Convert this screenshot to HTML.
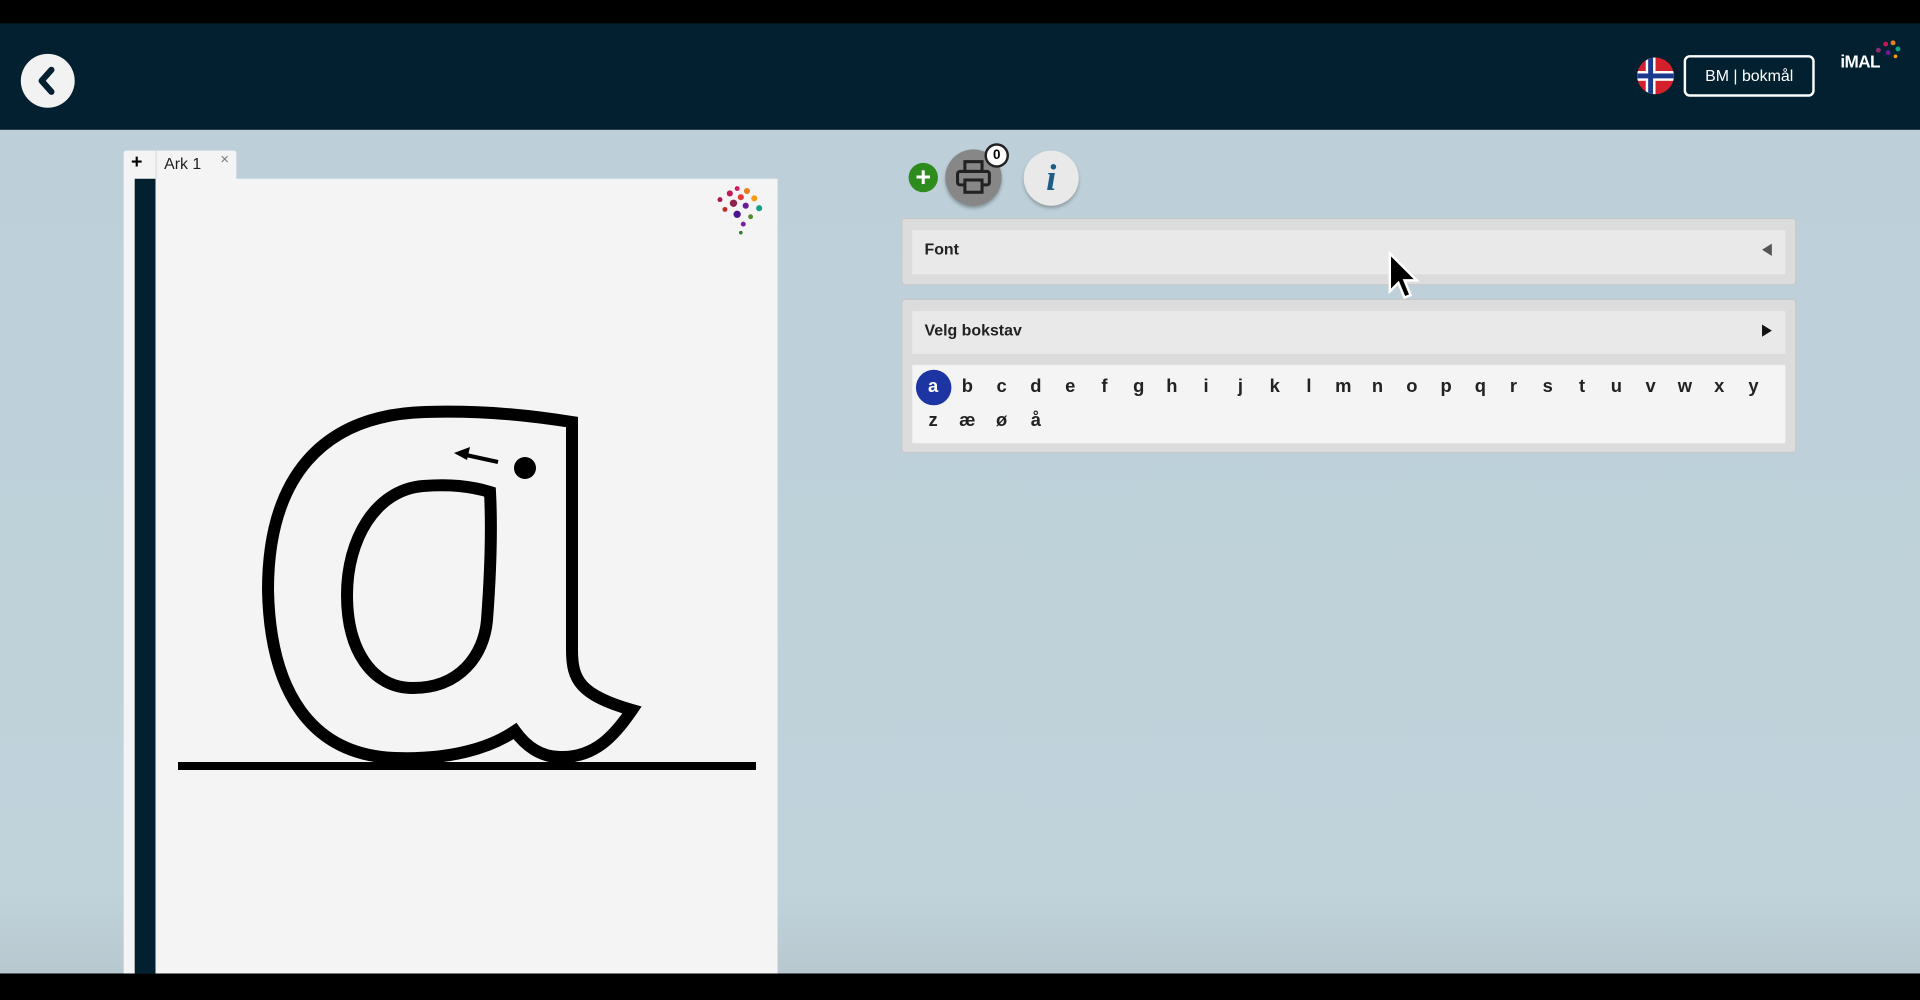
<!DOCTYPE html>
<html><head><meta charset="utf-8"><style>
*{margin:0;padding:0;box-sizing:border-box}
html,body{width:1920px;height:1000px;overflow:hidden;background:#000;font-family:"Liberation Sans",sans-serif}
#s{position:absolute;left:0;top:0;width:1568px;height:817px;transform:scale(1.22449);transform-origin:0 0}
.a{position:absolute}
.letters span{position:absolute;width:28px;text-align:center;font-size:15px;font-weight:bold;color:#222;line-height:20px}
</style></head><body>
<div id="s">
<div class="a" style="left:0;top:19px;width:1568px;height:87px;background:#02202f"></div>
<div class="a" style="left:0;top:106px;width:1568px;height:689px;background:linear-gradient(#bdd0d9,#c0d3db 90%,#b8c8cf)"></div>
<!-- back -->
<div class="a" style="left:17px;top:44px;width:44px;height:44px;border-radius:50%;background:#f2f2f2"></div>
<svg class="a" style="left:17px;top:44px" width="44" height="44"><path d="M25 13 L17 22 L25 31" stroke="#02202f" stroke-width="5" fill="none" stroke-linecap="round" stroke-linejoin="round"/></svg>
<!-- flag -->
<svg class="a" style="left:1337px;top:47px" width="30" height="30"><clipPath id="c"><circle cx="15" cy="15" r="15"/></clipPath><g clip-path="url(#c)"><rect width="30" height="30" fill="#d3202a"/><rect x="7" width="8" height="30" fill="#fff"/><rect y="11" width="30" height="8" fill="#fff"/><rect x="9" width="4" height="30" fill="#1b3a8c"/><rect y="13" width="30" height="4" fill="#1b3a8c"/></g></svg>
<div class="a" style="left:1375px;top:45px;width:107px;height:34px;border:2px solid #fff;border-radius:5px;color:#fff;font-size:13px;text-align:center;line-height:30px">BM | bokmål</div>
<div class="a" style="left:1503px;top:42px;color:#fff;font-weight:bold;font-size:14px;letter-spacing:-0.5px">iMAL</div>
<svg class="a" style="left:1520px;top:30px" width="36" height="30"><g fill="#c2185b"><circle cx="20" cy="6" r="2"/><circle cx="26" cy="5" r="2" fill="#e67e22"/><circle cx="30" cy="10" r="2" fill="#16a085"/><circle cx="14" cy="11" r="2" fill="#8e2d6b"/><circle cx="22" cy="13" r="2" fill="#6a1b9a"/><circle cx="28" cy="16" r="1.5" fill="#f39c12"/></g></svg>
<!-- sheet -->
<div class="a" style="left:101px;top:123px;width:92px;height:25px;background:#f4f4f4;border-radius:2px 2px 0 0"></div>
<div class="a" style="left:107px;top:124px;font-size:16px;font-weight:bold">+</div>
<div class="a" style="left:127px;top:123px;width:1px;height:24px;background:#ddd"></div>
<div class="a" style="left:134px;top:126px;font-size:13px;color:#222">Ark 1</div>
<div class="a" style="left:180px;top:123px;font-size:12px;color:#777">×</div>
<div class="a" style="left:101px;top:146px;width:534px;height:649px;background:#f4f4f4"></div>
<div class="a" style="left:110px;top:146px;width:17px;height:649px;background:#02202f"></div>
<svg class="a" style="left:580px;top:150px" width="48" height="46"><circle cx="22" cy="4" r="2" fill="#d81b60"/><circle cx="30" cy="6" r="2.5" fill="#e67e22"/><circle cx="16" cy="8" r="2.5" fill="#c2185b"/><circle cx="25" cy="11" r="2.5" fill="#e53935"/><circle cx="36" cy="12" r="2.5" fill="#f39c12"/><circle cx="8" cy="13" r="2" fill="#ad1457"/><circle cx="19" cy="16" r="3" fill="#8e244d"/><circle cx="29" cy="18" r="2.5" fill="#6a1b9a"/><circle cx="40" cy="20" r="2.5" fill="#16a085"/><circle cx="12" cy="21" r="2" fill="#c62828"/><circle cx="22" cy="25" r="3" fill="#4a148c"/><circle cx="33" cy="27" r="2" fill="#558b2f"/><circle cx="27" cy="33" r="2" fill="#7b1fa2"/><circle cx="25" cy="40" r="1.5" fill="#2e7d32"/></svg>
<!-- buttons -->
<div class="a" style="left:742px;top:133px;width:24px;height:24px;border-radius:50%;background:#2e8b1e;color:#fff;font-size:22px;font-weight:bold;text-align:center;line-height:23px">+</div>
<div class="a" style="left:772px;top:122px;width:46px;height:46px;border-radius:50%;background:#878787;box-shadow:0 2px 3px rgba(0,0,0,.3)"></div>
<svg class="a" style="left:779px;top:130px" width="32" height="30"><rect x="9" y="2" width="14" height="8" fill="none" stroke="#222" stroke-width="2.5"/><rect x="3" y="10" width="26" height="11" rx="2" fill="none" stroke="#222" stroke-width="2.5"/><rect x="9" y="17" width="14" height="10" fill="#878787" stroke="#222" stroke-width="2.5"/></svg>
<div class="a" style="left:804px;top:117px;width:20px;height:20px;border-radius:50%;background:#fff;border:2px solid #222;font-size:11px;font-weight:bold;text-align:center;line-height:16px">0</div>
<div class="a" style="left:836px;top:123px;width:45px;height:45px;border-radius:50%;background:#e9e9e9;box-shadow:0 2px 3px rgba(0,0,0,.25);font-family:'Liberation Serif',serif;font-style:italic;font-weight:bold;font-size:30px;color:#1d5c86;text-align:center;line-height:45px">i</div>
<!-- panels -->
<div class="a" style="left:736px;top:178px;width:731px;height:55px;background:#dcdcdc;border:1px solid #c8c8c8;border-radius:3px"></div>
<div class="a" style="left:745px;top:188px;width:713px;height:36px;background:#e9e9e9"></div>
<div class="a" style="left:755px;top:196px;font-size:13px;font-weight:bold;color:#222">Font</div>
<div class="a" style="left:1439px;top:199px;width:0;height:0;border-top:5px solid transparent;border-bottom:5px solid transparent;border-right:8px solid #555"></div>
<div class="a" style="left:736px;top:244px;width:731px;height:126px;background:#dcdcdc;border:1px solid #c8c8c8;border-radius:3px"></div>
<div class="a" style="left:745px;top:254px;width:713px;height:35px;background:#e9e9e9"></div>
<div class="a" style="left:755px;top:262px;font-size:13px;font-weight:bold;color:#222">Velg bokstav</div>
<div class="a" style="left:1439px;top:265px;width:0;height:0;border-top:5px solid transparent;border-bottom:5px solid transparent;border-left:8px solid #111"></div>
<div class="a" style="left:745px;top:298px;width:713px;height:64px;background:#f4f4f4"></div>
<div class="a" style="left:748px;top:302px;width:29px;height:29px;border-radius:50%;background:#1c35a3"></div>
<div class="letters">
<span style="left:748px;top:306px;color:#fff">a</span><span style="left:776px;top:306px">b</span><span style="left:804px;top:306px">c</span><span style="left:832px;top:306px">d</span><span style="left:860px;top:306px">e</span><span style="left:888px;top:306px">f</span><span style="left:916px;top:306px">g</span><span style="left:943px;top:306px">h</span><span style="left:971px;top:306px">i</span><span style="left:999px;top:306px">j</span><span style="left:1027px;top:306px">k</span><span style="left:1055px;top:306px">l</span><span style="left:1083px;top:306px">m</span><span style="left:1111px;top:306px">n</span><span style="left:1139px;top:306px">o</span><span style="left:1167px;top:306px">p</span><span style="left:1195px;top:306px">q</span><span style="left:1222px;top:306px">r</span><span style="left:1250px;top:306px">s</span><span style="left:1278px;top:306px">t</span><span style="left:1306px;top:306px">u</span><span style="left:1334px;top:306px">v</span><span style="left:1362px;top:306px">w</span><span style="left:1390px;top:306px">x</span><span style="left:1418px;top:306px">y</span>
<span style="left:748px;top:334px">z</span><span style="left:776px;top:334px">æ</span><span style="left:804px;top:334px">ø</span><span style="left:832px;top:334px">å</span>
</div>
<svg class="a" style="left:1132px;top:205px" width="30" height="45"><path d="M3 2 L3 33 L10 26 L15 38 L20 36 L15 24 L25 24 Z" fill="#000" stroke="#fff" stroke-width="2"/></svg>
</div>
<svg style="position:absolute;left:0;top:0" width="1920" height="1000">
<path d="M572,422 L572,650 C572,680 580,695 632,710 C615,735 595,758 560,757 C540,757 525,745 515,731 C490,748 450,760 395,758 C310,755 270,690 268,590 C268,480 320,415 425,412 C490,410 540,417 572,422 Z" fill="none" stroke="#000" stroke-width="12" stroke-linejoin="miter"/>
<path d="M490,492 C470,486 450,484 423,486 C375,490 347,540 347,595 C347,650 372,688 413,688 C460,688 484,655 487,620 C490,580 492,530 490,492 Z" fill="none" stroke="#000" stroke-width="12"/>
<path d="M498,462 L466,455" stroke="#000" stroke-width="4"/><path d="M454,453 L470,447 L467,460 Z" fill="#000"/>
<circle cx="525" cy="468" r="11" fill="#000"/>
<rect x="178" y="762" width="578" height="8" fill="#000"/>
</svg>
</body></html>
